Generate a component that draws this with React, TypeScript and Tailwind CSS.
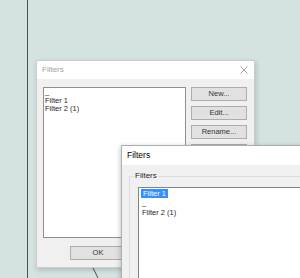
import * as React from "react";

const font = { fontFamily: '"Segoe UI", "Liberation Sans", "Noto Sans", sans-serif' };

function Btn({ label }: { label: string }) {
  return (
    <div className="h-[14px] w-[56px] border border-[#adadad] bg-[#e1e1e1] flex items-center justify-center text-[7.5px] text-[#333]">
      {label}
    </div>
  );
}

function ListItem({ text }: { text: string }) {
  return <div className="h-[8.5px] leading-[8.5px] px-[1px]">{text}</div>;
}

export default function App() {
  return (
    <div className="relative w-[300px] h-[278px] overflow-hidden bg-[#d5e2e2] antialiased" style={font}>
      {/* canvas lines behind the dialogs */}
      <svg className="absolute inset-0" width="300" height="278">
        <line x1="27.5" y1="0" x2="27.5" y2="278" stroke="#4a4f50" strokeWidth="1" />
        <line x1="90" y1="262" x2="98" y2="278" stroke="#4a4f50" strokeWidth="1" />
      </svg>

      {/* back dialog, inactive */}
      <div className="absolute left-[36px] top-[60px] w-[219px] h-[208px] bg-[#f0f0f0] border border-[#c9cfcf] shadow-[1px_2px_5px_rgba(0,0,0,0.18)] flex flex-col">
        <div className="h-[18px] bg-white flex items-center justify-between pl-[5px] pr-[6px]">
          <span className="text-[8px] text-[#a0a0a0]">Filters</span>
          <svg width="8" height="8" viewBox="0 0 8 8">
            <path d="M0.5 0.5 L7.5 7.5 M7.5 0.5 L0.5 7.5" stroke="#8a8a8a" strokeWidth="0.8" />
          </svg>
        </div>
        <div className="flex flex-1 pl-[6px] pr-[7px] pt-[8px]">
          <div className="flex flex-col">
            <div className="w-[143px] h-[151px] bg-white border border-[#8f8f8f] text-[7.5px] text-[#1e1e1e]">
              <ListItem text="_" />
              <ListItem text="Filter 1" />
              <ListItem text="Filter 2 (1)" />
            </div>
            <div className="flex pl-[27px] pt-[8px]">
              <div className="h-[14px] w-[56px] border border-[#adadad] bg-[#e1e1e1] flex items-center justify-center text-[7.5px] text-[#333]">
                OK
              </div>
            </div>
          </div>
          <div className="flex flex-col gap-[5px] ml-[5px]">
            <Btn label="New..." />
            <Btn label="Edit..." />
            <Btn label="Rename..." />
            <Btn label="Delete" />
          </div>
        </div>
      </div>

      {/* front dialog, active */}
      <div className="absolute left-[121px] top-[145px] w-[200px] h-[160px] bg-[#f0f0f0] border border-[#a9b0b0] shadow-[-1px_1px_5px_rgba(0,0,0,0.2)] flex flex-col">
        <div className="h-[19px] bg-white flex items-center pl-[5px]">
          <span className="text-[8.5px] text-black">Filters</span>
        </div>
        <div className="flex-1 pl-[7px] pt-[6px]">
          <div className="relative border-l border-t border-[#dcdcdc] h-full mt-[5px] pl-[8px] pt-[10px]">
            <span className="absolute left-[4px] top-[-6px] bg-[#f0f0f0] px-[1px] text-[8px] text-[#1e1e1e] leading-[10px]">Filters</span>
            <div className="bg-white border-l border-t border-[#828282] h-full text-[7.5px] text-[#1e1e1e] pl-[2px] pt-[1px]">
              <div className="h-[9px] leading-[9px] flex">
                <span className="bg-[#3390ff] text-white px-[2px]">Filter 1</span>
              </div>
              <div className="h-[9.5px] leading-[9.5px] px-[1px]">_</div>
              <div className="h-[9.5px] leading-[9.5px] px-[1px]">Filter 2 (1)</div>
            </div>
          </div>
        </div>
      </div>
    </div>
  );
}
